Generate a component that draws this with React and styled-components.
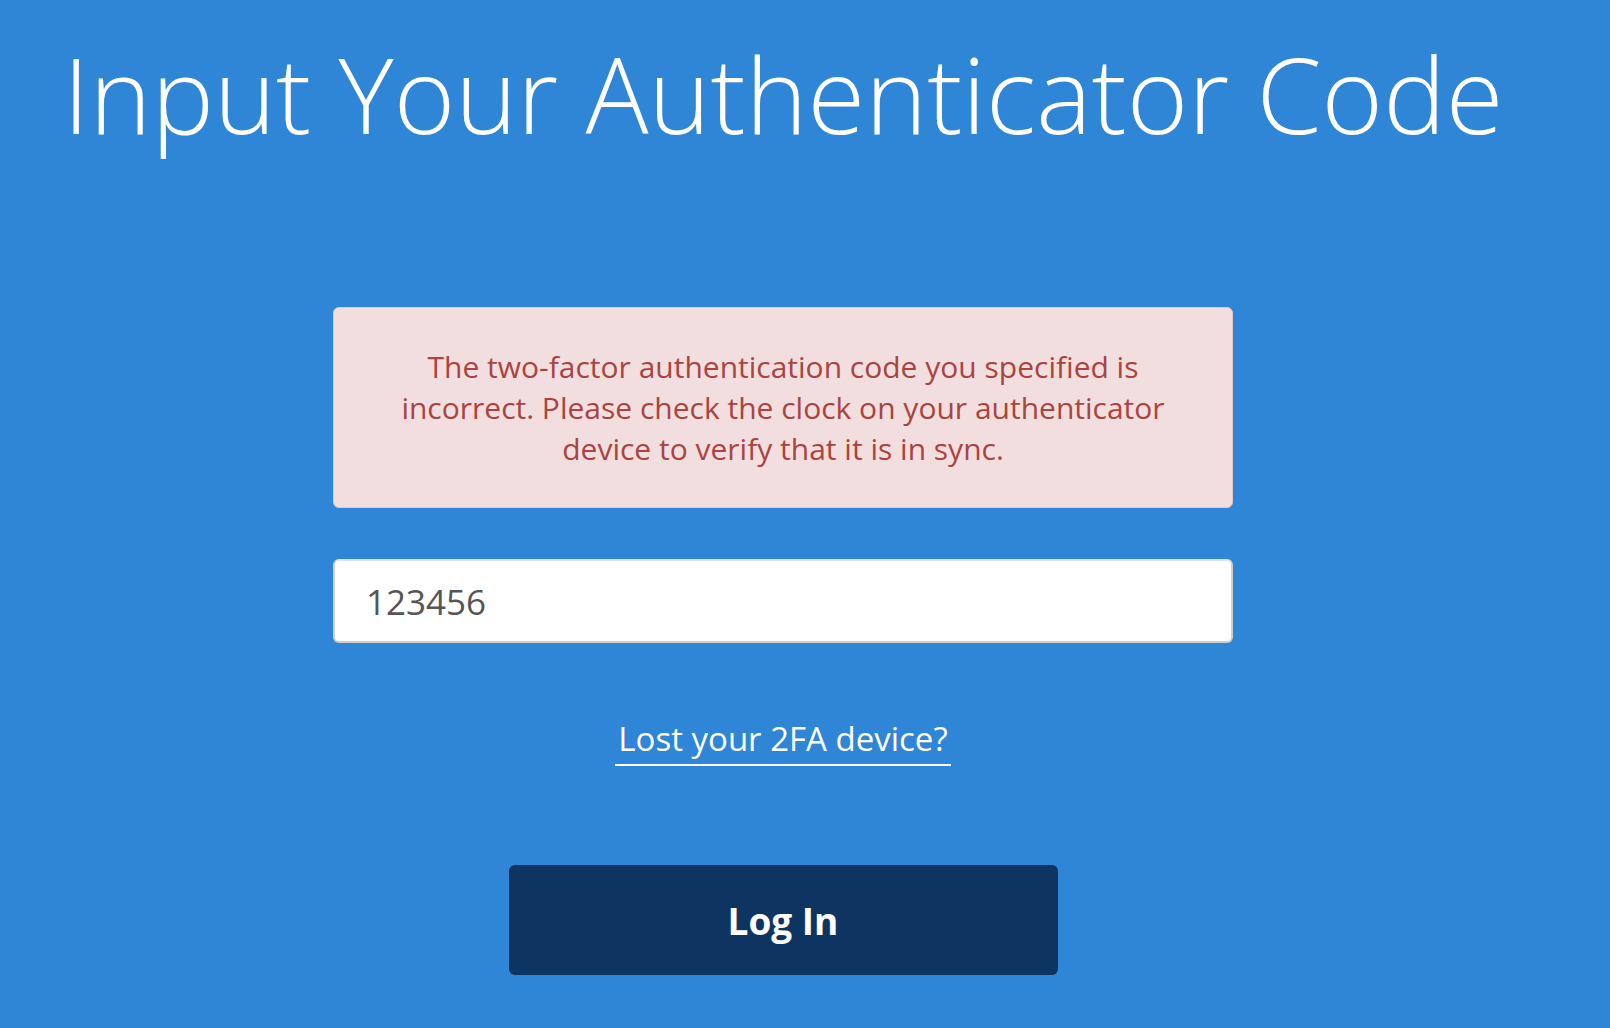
import React from 'react';
import styled, { createGlobalStyle } from 'styled-components';

const GlobalStyle = createGlobalStyle`
  html, body {
    margin: 0;
    padding: 0;
    background-color: #2f85d6;
  }
  body {
    font-family: "Open Sans", "Liberation Sans", sans-serif;
    min-height: 100vh;
  }
`;

const Page = styled.main`
  display: flex;
  flex-direction: column;
  min-height: 1028px;
  overflow: hidden;
`;

const Title = styled.h1`
  margin: 41px 0 0 63px;
  font-size: 105px;
  font-weight: 300;
  line-height: 1;
  color: #ffffff;
  white-space: nowrap;
`;

const Form = styled.form`
  display: flex;
  flex-direction: column;
  width: 900px;
  margin: 161px 0 0 333px;
`;

const Alert = styled.div`
  padding: 38px 38px;
  background-color: #f2dede;
  border: 1px solid #e6c6cb;
  border-radius: 6px;
  color: #a94442;
  font-size: 30px;
  line-height: normal;
  text-align: center;
`;

const CodeInput = styled.input`
  box-sizing: border-box;
  height: 84px;
  margin-top: 51px;
  padding: 0 31px;
  border: 2px solid #cfcfcf;
  border-top-color: #e2e2e2;
  border-radius: 6px;
  background: #ffffff;
  font-family: "Open Sans", "Liberation Sans", sans-serif;
  font-size: 35px;
  color: #555555;
  outline: none;
`;

const Actions = styled.div`
  display: flex;
  flex-direction: column;
  align-items: center;
`;

const LostLink = styled.a`
  margin-top: 73px;
  padding: 0 3px 3px;
  font-size: 33px;
  line-height: normal;
  color: #ffffff;
  text-decoration: none;
  border-bottom: 2px solid #ffffff;
  cursor: pointer;
`;

const LoginButton = styled.button`
  width: 549px;
  height: 110px;
  margin-top: 99px;
  border: none;
  border-radius: 6px;
  background-color: #0e3562;
  color: #ffffff;
  font-family: "Open Sans", "Liberation Sans", sans-serif;
  font-size: 37px;
  font-weight: 700;
  cursor: pointer;
`;

function App() {
  return (
    <Page>
      <GlobalStyle />
      <Title>Input Your Authenticator Code</Title>
      <Form onSubmit={(e) => e.preventDefault()}>
        <Alert>
          The two-factor authentication code you specified is incorrect. Please check the clock on your authenticator device to verify that it is in sync.
        </Alert>
        <CodeInput type="text" defaultValue="123456" />
        <Actions>
          <LostLink>Lost your 2FA device?</LostLink>
          <LoginButton type="submit">Log In</LoginButton>
        </Actions>
      </Form>
    </Page>
  );
}

export default App;
